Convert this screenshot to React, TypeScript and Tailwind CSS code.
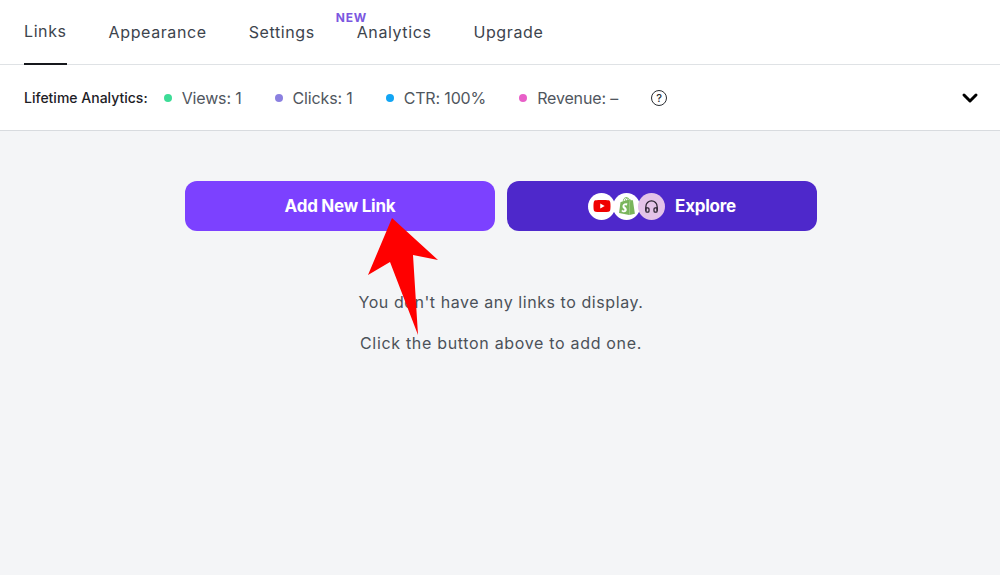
import { FaYoutube } from "react-icons/fa"
import { SiShopify } from "react-icons/si"
import { FiHeadphones } from "react-icons/fi"
import { ChevronDown } from "lucide-react"

const tabs = ["Links", "Appearance", "Settings", "Analytics", "Upgrade"]

const stats = [
  { label: "Views: 1", dot: "bg-[#3ddc97]" },
  { label: "Clicks: 1", dot: "bg-[#8b80e0]" },
  { label: "CTR: 100%", dot: "bg-[#12a5f4]" },
  { label: "Revenue: –", dot: "bg-[#e85fc8]" },
]

const App = () => {
  return (
    <div className="relative h-[575px] w-[1000px] overflow-hidden bg-[#f4f5f7] font-['Inter',sans-serif] text-[#3d444d]">
      {/* Tabs */}
      <nav className="flex h-[65px] gap-[42px] border-b border-[#dfe2e5] bg-white px-6">
        {tabs.map((tab) => (
          <div
            key={tab}
            className={`relative flex h-[65px] items-center pb-[2px] text-base tracking-[0.6px] ${
              tab === "Links" ? "border-b-2 border-[#16181c]" : ""
            }`}
          >
            {tab === "Analytics" && (
              <span className="absolute left-[-21px] top-[10px] text-xs font-bold tracking-[0.8px] text-[#7b57e0]">NEW</span>
            )}
            {tab}
          </div>
        ))}
      </nav>

      {/* Lifetime analytics */}
      <div className="flex h-[66px] items-center border-b border-[#d8dbdf] bg-white pl-6 pr-[18px] pt-[1px]">
        <span className="mr-4 text-sm font-medium text-[#1d2025]">Lifetime Analytics:</span>
        <div className="flex items-center gap-[33px]">
          {stats.map((s) => (
            <div key={s.label} className="flex items-center gap-[10px] text-base tracking-[-0.15px] text-[#50565e]">
              <span className={`h-2 w-2 rounded-full ${s.dot}`}></span>
              {s.label}
            </div>
          ))}
        </div>
        <span className="ml-[33px] flex h-4 w-4 items-center justify-center rounded-full border border-[#2a2d32] text-[11px] font-medium text-[#2a2d32]">?</span>
        <ChevronDown className="ml-auto h-6 w-6 text-black" strokeWidth={3} />
      </div>

      {/* Buttons */}
      <div className="mt-[50px] flex justify-center gap-3 pl-[2px]">
        <button className="h-[50px] w-[310px] rounded-xl bg-[#7c41ff] pt-[1px] text-[17px] font-bold tracking-[-0.25px] text-white">
          Add New Link
        </button>
        <button className="flex h-[50px] w-[310px] items-center justify-center rounded-xl bg-[#4e28cb] text-[17px] font-bold tracking-[-0.25px] text-white">
          <span className="flex items-center">
            <span className="flex h-[27px] w-[27px] items-center justify-center rounded-full bg-white">
              <FaYoutube className="h-[18px] w-[18px] text-[#f00000]" />
            </span>
            <span className="-ml-[2px] flex h-[27px] w-[27px] items-center justify-center rounded-full bg-white">
              <SiShopify className="h-[18px] w-[18px] text-[#7ab55c]" />
            </span>
            <span className="-ml-[2px] flex h-[27px] w-[27px] items-center justify-center rounded-full bg-[#e3c3e8]">
              <FiHeadphones className="h-[15px] w-[15px] text-[#2a2230]" />
            </span>
          </span>
          <span className="ml-[10px] pt-[1px]">Explore</span>
        </button>
      </div>

      {/* Empty state */}
      <div className="mt-[61px] flex flex-col items-center gap-[21px] pl-[2px] text-base leading-5 tracking-[0.57px] text-[#4b5159]">
        <p>You don't have any links to display.</p>
        <p className="tracking-[0.68px]">Click the button above to add one.</p>
      </div>

      {/* Red arrow annotation */}
      <svg className="absolute left-[360px] top-[210px]" width="90" height="135" viewBox="0 0 90 135">
        <polygon points="32,8 78,50 53,45 58,125 30,52 8,65" fill="#ff0000" />
      </svg>
    </div>
  )
}

export default App
